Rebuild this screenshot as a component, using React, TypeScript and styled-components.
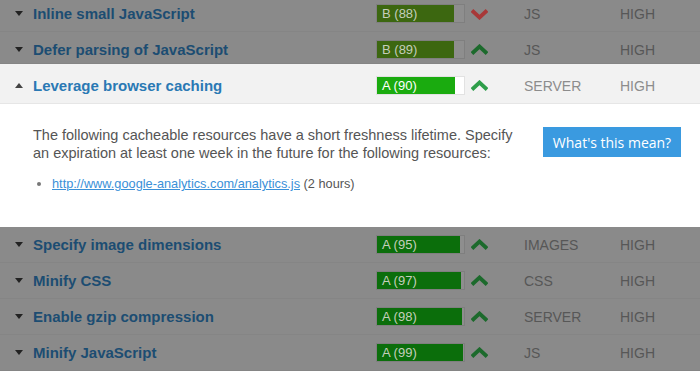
import styled, { createGlobalStyle } from "styled-components";

const GlobalStyle = createGlobalStyle`
	html, body {
		margin:0;
		padding:0;
		background:#8a8a8a;
		overflow:hidden;
	}
	body {
		font-family:"Liberation Sans", Arial, Helvetica, sans-serif;
	}
`;

const Page = styled.div`
	width:700px;
	height:371px;
	overflow:hidden;
	display:flex;
	flex-direction:column;
`;

const List = styled.div<{ $shift?: number }>`
	display:flex;
	flex-direction:column;
	margin-top:${(p) => p.$shift || 0}px;
`;

const Row = styled.div<{ $dim?: boolean; $h?: number; $padTop?: number }>`
	display:grid;
	grid-template-columns:33px 343px 94px 54px 96px 1fr;
	align-items:center;
	height:${(p) => p.$h || 36}px;
	padding-top:${(p) => p.$padTop || 0}px;
	box-sizing:border-box;
	background:${(p) => (p.$dim ? "#8a8a8a" : "#f2f2f2")};
	border-bottom:1px solid ${(p) => (p.$dim ? "#858585" : "#e6e6e6")};
`;

const Caret = styled.span<{ $up?: boolean; $dim?: boolean }>`
	justify-self:start;
	margin-left:15px;
	width:0;
	height:0;
	border-left:4px solid transparent;
	border-right:4px solid transparent;
	${(p) =>
		p.$up
			? `border-bottom:5px solid ${p.$dim ? "#222" : "#444"};`
			: `border-top:5px solid ${p.$dim ? "#222" : "#444"};`}
`;

const Title = styled.span<{ $dim?: boolean }>`
	font-size:15px;
	font-weight:bold;
	color:${(p) => (p.$dim ? "#1c4d72" : "#2a79b4")};
	white-space:nowrap;
`;

const Bar = styled.div<{ $dim?: boolean }>`
	width:89px;
	height:19px;
	box-sizing:border-box;
	border:1px solid ${(p) => (p.$dim ? "#7f7f7f" : "#e2e2e2")};
	background:${(p) => (p.$dim ? "#8e8e8e" : "#fff")};
	display:flex;
`;

const Fill = styled.div<{ $color: string }>`
	background:${(p) => p.$color};
	height:100%;
	color:${(p) => (p.$color === "#1aab0f" ? "#fff" : "#c4cebb")};
	font-size:13px;
	line-height:17px;
	padding-left:5px;
	box-sizing:border-box;
	white-space:nowrap;
`;

const Chevron = styled.svg`
	width:17px;
	height:12px;
	margin-left:1px;
	display:block;
`;

const Label = styled.span<{ $dim?: boolean }>`
	font-size:14px;
	color:${(p) => (p.$dim ? "#575757" : "#8c8c8c")};
`;

const Panel = styled.div`
	background:#fff;
	height:123px;
	box-sizing:border-box;
	padding:22px 19px 0 33px;
	display:flex;
	justify-content:space-between;
	align-items:flex-start;
`;

const Body = styled.div`
	width:490px;
	color:#555;
`;

const Para = styled.p`
	margin:0;
	font-size:14.5px;
	line-height:18px;
`;

const Bullets = styled.ul`
	margin:14px 0 0;
	padding-left:19px;
	font-size:12.75px;
	line-height:16px;
	li::marker {
		color:#777;
	}
`;

const Link = styled.a`
	color:#3a90d8;
	text-decoration:underline;
`;

const HelpButton = styled.button`
	margin-top:1px;
	width:138px;
	height:30px;
	border:none;
	background:#3a9ae0;
	color:#fff;
	font-family:"Open Sans", "Liberation Sans", sans-serif;
	font-size:14px;
	padding:0;
	cursor:pointer;
`;

type Item = {
	title: string;
	grade: string;
	score: number;
	up: boolean;
	type: string;
};

const before: Item[] = [
	{ title: "Inline small JavaScript", grade: "B", score: 88, up: false, type: "JS" },
	{ title: "Defer parsing of JavaScript", grade: "B", score: 89, up: true, type: "JS" },
];

const after: Item[] = [
	{ title: "Specify image dimensions", grade: "A", score: 95, up: true, type: "IMAGES" },
	{ title: "Minify CSS", grade: "A", score: 97, up: true, type: "CSS" },
	{ title: "Enable gzip compression", grade: "A", score: 98, up: true, type: "SERVER" },
	{ title: "Minify JavaScript", grade: "A", score: 99, up: true, type: "JS" },
];

function Arrow({ up, color }: { up: boolean; color: string }) {
	return (
		<Chevron viewBox="0 0 17 12">
			{up ? (
				<path d="M1 9.5 L8.5 2.5 L16 9.5" fill="none" stroke={color} strokeWidth="3.8" />
			) : (
				<path d="M1 2.5 L8.5 9.5 L16 2.5" fill="none" stroke={color} strokeWidth="3.8" />
			)}
		</Chevron>
	);
}

function fillColor(grade: string, dim: boolean) {
	if (!dim) return "#1aab0f";
	return grade === "B" ? "#3c6710" : "#0b6e0b";
}

function ResultRow({ item, dim, h, padTop, open }: { item: Item; dim: boolean; h?: number; padTop?: number; open?: boolean }) {
	const arrowColor = item.up ? (dim ? "#1c6a2c" : "#2e9e4a") : "#a83838";
	return (
		<Row $dim={dim} $h={h} $padTop={padTop}>
			<Caret $up={open} $dim={dim} />
			<Title $dim={dim}>{item.title}</Title>
			<Bar $dim={dim}>
				<Fill $color={fillColor(item.grade, dim)} style={{ width: `${item.score}%` }}>
					{item.grade} ({item.score})
				</Fill>
			</Bar>
			<Arrow up={item.up} color={arrowColor} />
			<Label $dim={dim}>{item.type}</Label>
			<Label $dim={dim}>HIGH</Label>
		</Row>
	);
}

export default function App() {
	return (
		<>
			<GlobalStyle />
			<Page>
				<List $shift={-4}>
					<ResultRow item={before[0]} dim />
					<ResultRow item={before[1]} dim h={32} padTop={4} />
				</List>
				<ResultRow
					item={{ title: "Leverage browser caching", grade: "A", score: 90, up: true, type: "SERVER" }}
					dim={false}
					h={40}
					padTop={4}
					open
				/>
				<Panel>
					<Body>
						<Para>
							The following cacheable resources have a short freshness lifetime. Specify an expiration at least one week in the future for the following resources:
						</Para>
						<Bullets>
							<li>
								<Link href="#">http://www.google-analytics.com/analytics.js</Link> (2 hours)
							</li>
						</Bullets>
					</Body>
					<HelpButton>What's this mean?</HelpButton>
				</Panel>
				<List>
					{after.map((item) => (
						<ResultRow key={item.title} item={item} dim />
					))}
				</List>
			</Page>
		</>
	);
}
